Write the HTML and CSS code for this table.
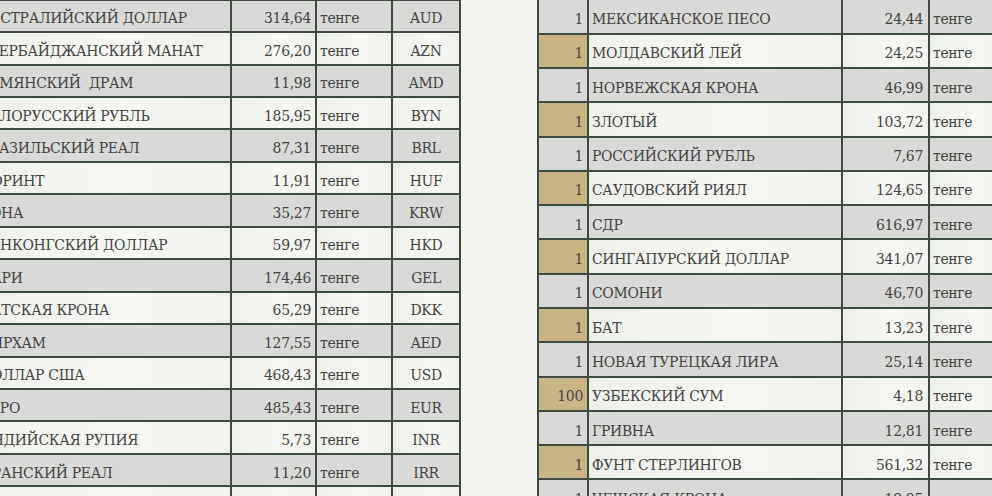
FILE: index.html
```html
<!DOCTYPE html>
<html lang="ru">
<head>
<meta charset="utf-8">
<title>Курсы валют</title>
<link rel="stylesheet" href="styles.css">
</head>
<body>
<div class="page">
  <div class="rates rates-left">
    <div class="row gray"><div class="cell name">АВСТРАЛИЙСКИЙ ДОЛЛАР</div><div class="cell val">314,64</div><div class="cell unit">тенге</div><div class="cell code">AUD</div></div>
    <div class="row light"><div class="cell name">АЗЕРБАЙДЖАНСКИЙ МАНАТ</div><div class="cell val">276,20</div><div class="cell unit">тенге</div><div class="cell code">AZN</div></div>
    <div class="row gray"><div class="cell name">АРМЯНСКИЙ&nbsp; ДРАМ</div><div class="cell val">11,98</div><div class="cell unit">тенге</div><div class="cell code">AMD</div></div>
    <div class="row light"><div class="cell name">БЕЛОРУССКИЙ РУБЛЬ</div><div class="cell val">185,95</div><div class="cell unit">тенге</div><div class="cell code">BYN</div></div>
    <div class="row gray"><div class="cell name">БРАЗИЛЬСКИЙ РЕАЛ</div><div class="cell val">87,31</div><div class="cell unit">тенге</div><div class="cell code">BRL</div></div>
    <div class="row light"><div class="cell name">ФОРИНТ</div><div class="cell val">11,91</div><div class="cell unit">тенге</div><div class="cell code">HUF</div></div>
    <div class="row gray"><div class="cell name">ВОНА</div><div class="cell val">35,27</div><div class="cell unit">тенге</div><div class="cell code">KRW</div></div>
    <div class="row light"><div class="cell name">ГОНКОНГСКИЙ ДОЛЛАР</div><div class="cell val">59,97</div><div class="cell unit">тенге</div><div class="cell code">HKD</div></div>
    <div class="row gray"><div class="cell name">ЛАРИ</div><div class="cell val">174,46</div><div class="cell unit">тенге</div><div class="cell code">GEL</div></div>
    <div class="row light"><div class="cell name">ДАТСКАЯ КРОНА</div><div class="cell val">65,29</div><div class="cell unit">тенге</div><div class="cell code">DKK</div></div>
    <div class="row gray"><div class="cell name">ДИРХАМ</div><div class="cell val">127,55</div><div class="cell unit">тенге</div><div class="cell code">AED</div></div>
    <div class="row light"><div class="cell name">ДОЛЛАР США</div><div class="cell val">468,43</div><div class="cell unit">тенге</div><div class="cell code">USD</div></div>
    <div class="row gray"><div class="cell name">ЕВРО</div><div class="cell val">485,43</div><div class="cell unit">тенге</div><div class="cell code">EUR</div></div>
    <div class="row light"><div class="cell name">ИНДИЙСКАЯ РУПИЯ</div><div class="cell val">5,73</div><div class="cell unit">тенге</div><div class="cell code">INR</div></div>
    <div class="row gray"><div class="cell name">ИРАНСКИЙ РЕАЛ</div><div class="cell val">11,20</div><div class="cell unit">тенге</div><div class="cell code">IRR</div></div>
    <div class="row light"><div class="cell name">ИЕНА</div><div class="cell val">3,12</div><div class="cell unit">тенге</div><div class="cell code">JPY</div></div>
  </div>

  <div class="rates rates-right">
    <div class="row gray"><div class="cell qty">1</div><div class="cell name">МЕКСИКАНСКОЕ ПЕСО</div><div class="cell val">24,44</div><div class="cell unit">тенге</div><div class="cell code">MXN</div></div>
    <div class="row light"><div class="cell qty tan">1</div><div class="cell name">МОЛДАВСКИЙ ЛЕЙ</div><div class="cell val">24,25</div><div class="cell unit">тенге</div><div class="cell code">MDL</div></div>
    <div class="row gray"><div class="cell qty">1</div><div class="cell name">НОРВЕЖСКАЯ КРОНА</div><div class="cell val">46,99</div><div class="cell unit">тенге</div><div class="cell code">NOK</div></div>
    <div class="row light"><div class="cell qty tan">1</div><div class="cell name">ЗЛОТЫЙ</div><div class="cell val">103,72</div><div class="cell unit">тенге</div><div class="cell code">PLN</div></div>
    <div class="row gray"><div class="cell qty">1</div><div class="cell name">РОССИЙСКИЙ РУБЛЬ</div><div class="cell val">7,67</div><div class="cell unit">тенге</div><div class="cell code">RUB</div></div>
    <div class="row light"><div class="cell qty tan">1</div><div class="cell name">САУДОВСКИЙ РИЯЛ</div><div class="cell val">124,65</div><div class="cell unit">тенге</div><div class="cell code">SAR</div></div>
    <div class="row gray"><div class="cell qty">1</div><div class="cell name">СДР</div><div class="cell val">616,97</div><div class="cell unit">тенге</div><div class="cell code">XDR</div></div>
    <div class="row light"><div class="cell qty tan">1</div><div class="cell name">СИНГАПУРСКИЙ ДОЛЛАР</div><div class="cell val">341,07</div><div class="cell unit">тенге</div><div class="cell code">SGD</div></div>
    <div class="row gray"><div class="cell qty">1</div><div class="cell name">СОМОНИ</div><div class="cell val">46,70</div><div class="cell unit">тенге</div><div class="cell code">TJS</div></div>
    <div class="row light"><div class="cell qty tan">1</div><div class="cell name">БАТ</div><div class="cell val">13,23</div><div class="cell unit">тенге</div><div class="cell code">THB</div></div>
    <div class="row gray"><div class="cell qty">1</div><div class="cell name">НОВАЯ ТУРЕЦКАЯ ЛИРА</div><div class="cell val">25,14</div><div class="cell unit">тенге</div><div class="cell code">TRY</div></div>
    <div class="row light"><div class="cell qty tan">100</div><div class="cell name">УЗБЕКСКИЙ СУМ</div><div class="cell val">4,18</div><div class="cell unit">тенге</div><div class="cell code">UZS</div></div>
    <div class="row gray"><div class="cell qty">1</div><div class="cell name">ГРИВНА</div><div class="cell val">12,81</div><div class="cell unit">тенге</div><div class="cell code">UAH</div></div>
    <div class="row light"><div class="cell qty tan">1</div><div class="cell name">ФУНТ СТЕРЛИНГОВ</div><div class="cell val">561,32</div><div class="cell unit">тенге</div><div class="cell code">GBP</div></div>
    <div class="row gray"><div class="cell qty">1</div><div class="cell name">ЧЕШСКАЯ КРОНА</div><div class="cell val">19,95</div><div class="cell unit">тенге</div><div class="cell code">CZK</div></div>
  </div>
</div>
</body>
</html>
```

FILE: styles.css
```css
html, body {
  margin: 0;
  padding: 0;
}
body {
  width: 992px;
  height: 496px;
  overflow: hidden;
  background: linear-gradient(90deg, #eef0e9 0%, #f4f5ef 50%, #eff1ea 100%);
  font-family: "DejaVu Serif", "Liberation Serif", serif;
  font-stretch: condensed;
  font-size: 15.5px;
  letter-spacing: -0.3px;
  color: #444442;
}
.page {
  display: flex;
  align-items: flex-start;
  gap: 76px;
}
.rates {
  flex-shrink: 0;
  display: flex;
  flex-direction: column;
  gap: 2px;
  border: 2px solid #3d4b40;
  background: #3d4b40;
}
.rates-left {
  margin-left: -42px;
  margin-top: -1.3px;
}
.rates-right {
  margin-top: -1.7px;
}
.row {
  display: grid;
  gap: 2px;
}
.rates-left .row {
  grid-template-columns: 270px 83px 74px 66px;
  height: 30.45px;
}
.rates-right .row {
  grid-template-columns: 48px 252px 85px 74px 66px;
  height: 32.3px;
}
.cell {
  display: flex;
  align-items: center;
  padding-top: 5px;
  box-sizing: border-box;
  white-space: nowrap;
  overflow: hidden;
}
.gray .cell {
  background: #d9d9d7;
}
.light .cell {
  background: linear-gradient(90deg, #eef0ea 0%, #f7f8f4 60%, #f1f2ec 100%);
}
.light .cell.tan {
  background: #c9b488;
}
.rates-left .name {
  padding-left: 20px;
}
.rates-right .name {
  padding-left: 3px;
}
.val {
  justify-content: flex-end;
  padding-right: 4px;
}
.rates-right .val {
  padding-right: 5px;
}
.qty {
  justify-content: flex-end;
  padding-right: 4px;
}
.unit {
  padding-left: 3px;
}
.code {
  justify-content: center;
}
```
